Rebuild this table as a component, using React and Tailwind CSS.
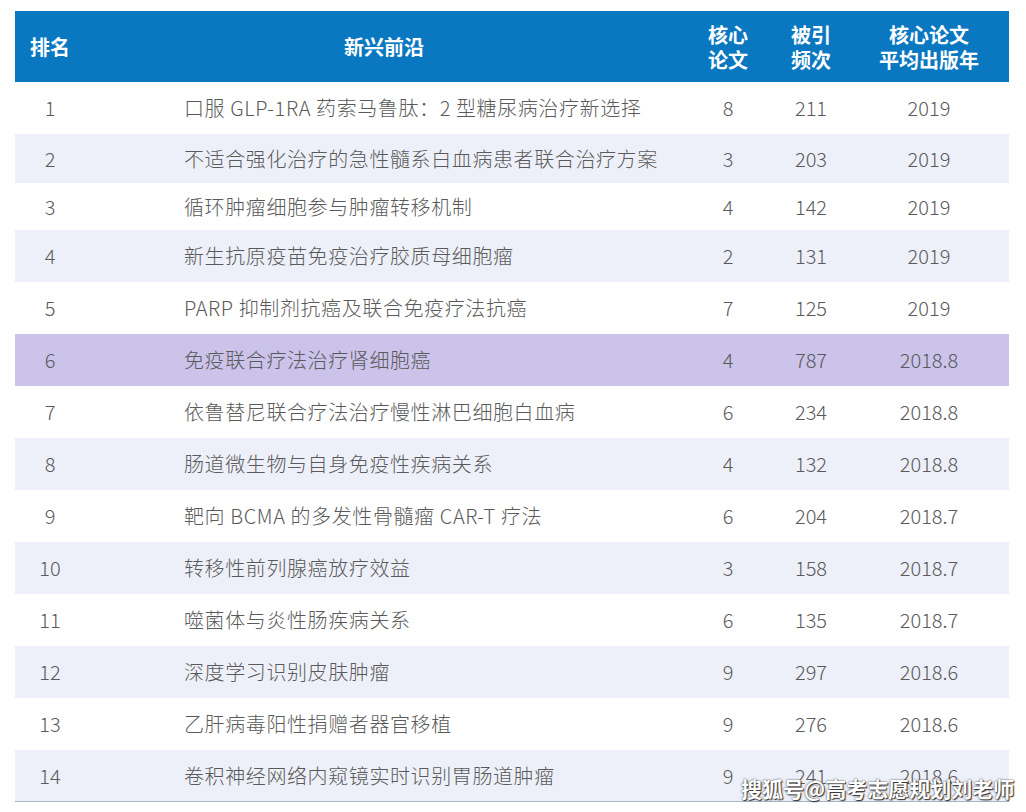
import React from 'react';

const rows = [
  ['1', '口服 GLP-1RA 药索马鲁肽：2 型糖尿病治疗新选择', '8', '211', '2019'],
  ['2', '不适合强化治疗的急性髓系白血病患者联合治疗方案', '3', '203', '2019'],
  ['3', '循环肿瘤细胞参与肿瘤转移机制', '4', '142', '2019'],
  ['4', '新生抗原疫苗免疫治疗胶质母细胞瘤', '2', '131', '2019'],
  ['5', 'PARP 抑制剂抗癌及联合免疫疗法抗癌', '7', '125', '2019'],
  ['6', '免疫联合疗法治疗肾细胞癌', '4', '787', '2018.8'],
  ['7', '依鲁替尼联合疗法治疗慢性淋巴细胞白血病', '6', '234', '2018.8'],
  ['8', '肠道微生物与自身免疫性疾病关系', '4', '132', '2018.8'],
  ['9', '靶向 BCMA 的多发性骨髓瘤 CAR-T 疗法', '6', '204', '2018.7'],
  ['10', '转移性前列腺癌放疗效益', '3', '158', '2018.7'],
  ['11', '噬菌体与炎性肠疾病关系', '6', '135', '2018.7'],
  ['12', '深度学习识别皮肤肿瘤', '9', '297', '2018.6'],
  ['13', '乙肝病毒阳性捐赠者器官移植', '9', '276', '2018.6'],
  ['14', '卷积神经网络内窥镜实时识别胃肠道肿瘤', '9', '241', '2018.6'],
];

// row heights follow the screenshot (row 3 is a little shorter)
const heights = ['h-[52px]', 'h-[49px]', 'h-[47px]', 'h-[52px]', 'h-[52px]', 'h-[52px]', 'h-[52px]', 'h-[52px]', 'h-[52px]', 'h-[52px]', 'h-[52px]', 'h-[52px]', 'h-[52px]', 'h-[51px]'];

const rowBg = (i) => {
  if (i === 5) return 'bg-[#cbc3ea]';
  return i % 2 === 1 ? 'bg-[#eef0f9]' : 'bg-white';
};

const App = () => {
  return (
    <div
      className="relative w-[1026px] h-[812px] bg-white pt-[11px] pl-[15px] overflow-hidden"
      style={{ fontFamily: '"Noto Sans CJK SC", "Noto Sans", sans-serif' }}
    >
      <div className="w-[994px]">
        {/* Header */}
        <div className="flex h-[71px] bg-[#0a77c1] text-white font-bold text-[20px] leading-[25px]">
          <div className="w-[70px] flex items-center justify-center">排名</div>
          <div className="w-[598px] flex items-center justify-center">新兴前沿</div>
          <div className="w-[90px] flex items-center justify-center text-center">核心<br />论文</div>
          <div className="w-[76px] flex items-center justify-center text-center">被引<br />频次</div>
          <div className="w-[160px] flex items-center justify-center text-center">核心论文<br />平均出版年</div>
        </div>

        {/* Rows */}
        {rows.map((r, i) => (
          <div
            key={r[0]}
            className={`flex items-center ${heights[i]} ${rowBg(i)} text-[20px] text-[#5a5a5a] font-light`}
          >
            <div className="w-[70px] text-center">{r[0]}</div>
            <div className="w-[598px] pl-[99px] tracking-[0.6px] whitespace-nowrap">{r[1]}</div>
            <div className="w-[90px] text-center">{r[2]}</div>
            <div className="w-[76px] text-center">{r[3]}</div>
            <div className="w-[160px] text-center">{r[4]}</div>
          </div>
        ))}
        <div className="h-px bg-[#a9b4c3]" />
      </div>

      {/* Watermark */}
      <div className="absolute left-[741px] top-[775px] text-[21px] font-bold text-white leading-[26px] whitespace-nowrap [text-shadow:0_0_2px_#333,1px_1px_1px_#333]">
        搜狐号@高考志愿规划刘老师
      </div>
    </div>
  );
};

export default App;
